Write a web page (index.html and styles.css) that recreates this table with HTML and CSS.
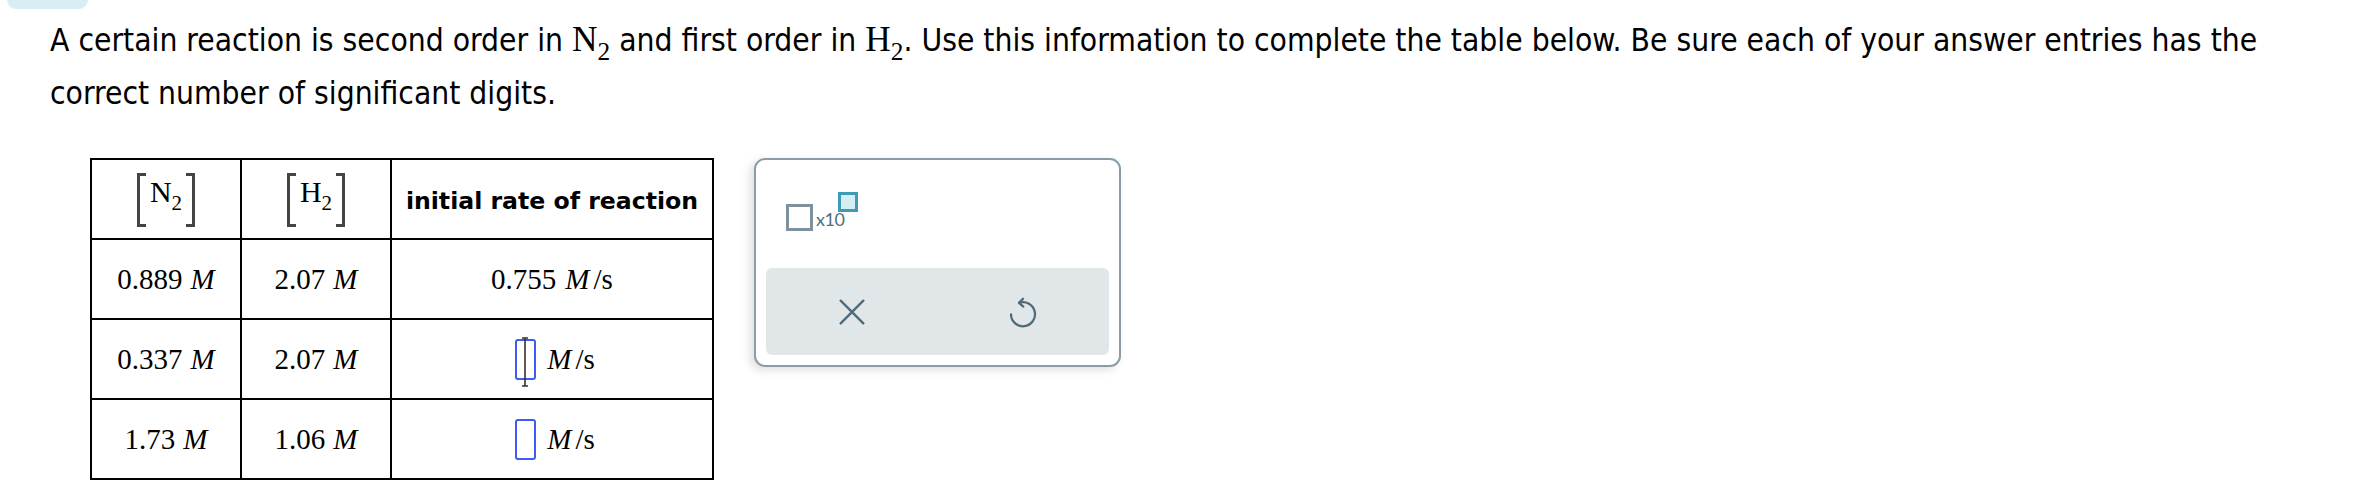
FILE: index.html
```html
<!DOCTYPE html>
<html>
<head>
<meta charset="utf-8">
<link rel="stylesheet" href="styles.css">
</head>
<body>
<div class="tab"></div>
<div class="page">
  <p class="prompt">A certain reaction is second order in <span class="chem">N<sub>2</sub></span> and first order in <span class="chem">H<sub>2</sub></span>. Use this information to complete the table below. Be sure each of your answer entries has the correct number of significant digits.</p>
  <div class="work">
    <div class="rate-table">
      <div class="cell head"><span class="br left"></span><span class="chem-h">N<sub>2</sub></span><span class="br right"></span></div>
      <div class="cell head"><span class="br left"></span><span class="chem-h">H<sub>2</sub></span><span class="br right"></span></div>
      <div class="cell head label">initial rate of reaction</div>

      <div class="cell">0.889<i class="unit">M</i></div>
      <div class="cell">2.07<i class="unit">M</i></div>
      <div class="cell">0.755<span class="rate-unit"><i>M</i>/s</span></div>

      <div class="cell">0.337<i class="unit">M</i></div>
      <div class="cell">2.07<i class="unit">M</i></div>
      <div class="cell"><span class="answer"><svg class="ibeam" width="10" height="50" viewBox="0 0 10 50"><path d="M2 1h6M5 1v48M2 49h6" stroke="#333" stroke-width="1.6" fill="none"/></svg></span><span class="rate-unit"><i>M</i>/s</span></div>

      <div class="cell">1.73<i class="unit">M</i></div>
      <div class="cell">1.06<i class="unit">M</i></div>
      <div class="cell"><span class="answer"></span><span class="rate-unit"><i>M</i>/s</span></div>
    </div>

    <div class="panel">
      <div class="sci">
        <span class="base-box"></span><span class="x10">x10</span><span class="exp-box"></span>
      </div>
      <div class="actions">
        <button class="act" aria-label="clear">
          <svg width="32" height="32" viewBox="0 0 24 24"><path d="M3.5 3.5L20.5 20.5M20.5 3.5L3.5 20.5" stroke="#4f6b7a" stroke-width="1.8" stroke-linecap="round" fill="none"/></svg>
        </button>
        <button class="act" aria-label="undo">
          <svg width="36" height="36" viewBox="0 0 24 24"><path d="M4 13.5A8 8 0 1 0 9.5 5.9" stroke="#4f6b7a" stroke-width="1.5" stroke-linecap="round" fill="none"/><path d="M12 3.2L9.3 5.9L12.2 8.4" stroke="#4f6b7a" stroke-width="1.5" stroke-linecap="round" stroke-linejoin="round" fill="none"/></svg>
        </button>
      </div>
    </div>
  </div>
</div>
</body>
</html>
```

FILE: styles.css
```css
body {
  margin: 0;
  background: #fff;
  color: #000;
  font-family: "DejaVu Sans", Verdana, sans-serif;
}

.tab {
  width: 81px;
  height: 9px;
  margin-left: 7px;
  background: #d8eef4;
  border-radius: 0 0 12px 12px;
}

.page {
  padding-left: 50px;
}

.prompt {
  margin: 5px 0 0;
  width: 2262px;
  font-size: 31.5px;
  line-height: 53px;
  font-stretch: condensed;
}

.chem {
  font-family: "Liberation Serif", serif;
  font-size: 1.12em;
  line-height: 0;
}

.chem sub {
  font-size: 0.72em;
  line-height: 0;
  vertical-align: -0.35em;
}

.work {
  display: flex;
  align-items: flex-start;
  gap: 40px;
  margin: 38px 0 0 40px;
}

.rate-table {
  display: grid;
  grid-template-columns: 150px 150px 322px;
  border-left: 2px solid #000;
  border-top: 2px solid #000;
}

.cell {
  box-sizing: border-box;
  height: 80px;
  border-right: 2px solid #000;
  border-bottom: 2px solid #000;
  display: flex;
  align-items: center;
  justify-content: center;
  font-family: "Liberation Serif", serif;
  font-size: 29px;
}

.unit {
  margin-left: 8px;
}

.rate-unit {
  margin-left: 9px;
}

.rate-unit i {
  margin-right: 4px;
}

.head {
  gap: 4px;
}

.br {
  display: block;
  width: 6px;
  height: 48px;
  margin-top: 2px;
  border: 3px solid #444;
}

.br.left {
  border-right: none;
}

.br.right {
  border-left: none;
}

.chem-h {
  font-size: 30px;
  margin-top: -6px;
}

.chem-h sub {
  font-size: 0.7em;
  vertical-align: -0.4em;
}

.label {
  font-family: "DejaVu Sans", Verdana, sans-serif;
  font-weight: bold;
  font-size: 23.6px;
  padding-top: 4px;
}

.answer {
  position: relative;
  box-sizing: border-box;
  width: 21px;
  height: 41px;
  margin-left: 6px;
  border: 2px solid #3e5cf4;
  border-radius: 3px;
}

.answer + .rate-unit {
  margin-left: 11px;
}

.ibeam {
  position: absolute;
  left: 3px;
  top: -4px;
}

.panel {
  box-sizing: border-box;
  width: 367px;
  height: 209px;
  padding: 10px;
  border: 2px solid #8a9ca6;
  border-radius: 11px;
  background: #fff;
  box-shadow: -4px 3px 10px rgba(0, 0, 0, 0.13);
  display: flex;
  flex-direction: column;
}

.sci {
  height: 98px;
  box-sizing: border-box;
  padding: 22px 0 0 20px;
  display: flex;
  align-items: flex-start;
}

.base-box {
  box-sizing: border-box;
  width: 27px;
  height: 27px;
  margin-top: 12px;
  border: 3px solid #7d929c;
}

.x10 {
  margin-top: 19px;
  margin-left: 3px;
  font-family: Lato, "Open Sans", sans-serif;
  font-size: 18px;
  line-height: 16px;
  color: #52707e;
  letter-spacing: -0.5px;
}

.exp-box {
  box-sizing: border-box;
  width: 20px;
  height: 20px;
  margin-left: -6px;
  border: 3px solid #3e9bb6;
  background: #d5eef3;
}

.actions {
  flex: 1;
  display: flex;
  background: #e1e6e9;
  border-radius: 6px;
}

.act {
  flex: 1;
  display: flex;
  align-items: center;
  justify-content: center;
  border: none;
  background: transparent;
  padding: 0;
}
```
